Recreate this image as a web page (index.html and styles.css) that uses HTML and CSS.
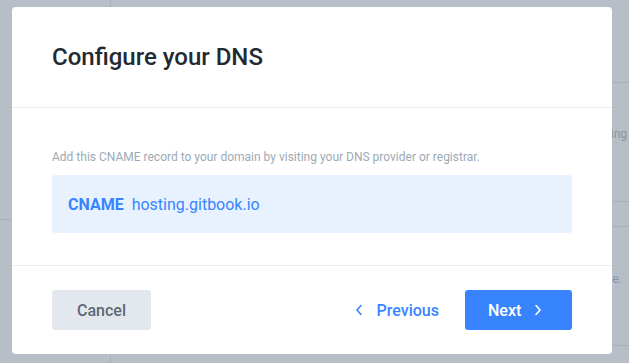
FILE: index.html
```html
<!DOCTYPE html>
<html lang="en">
<head>
  <meta charset="UTF-8" />
  <title>Configure your DNS</title>
  <link rel="stylesheet" href="styles.css">
</head>
<body>
  <div class="page">
    <aside class="sidebar">
      <div class="side-block"></div>
    </aside>
    <main class="content">
      <div class="row row-a"></div>
      <div class="row row-b"><span class="row-text">Custom domain setting</span></div>
      <div class="row row-c"></div>
      <div class="row row-d"><span class="row-text">Connect your domain to your space.</span></div>
    </main>
  </div>

  <div class="modal">
    <div class="modal-header">
      <h2 class="modal-title">Configure your DNS</h2>
    </div>
    <div class="modal-body">
      <p class="hint">Add this CNAME record to your domain by visiting your DNS provider or registrar.</p>
      <div class="record">
        <span class="record-type">CNAME</span>
        <span class="record-value">hosting.gitbook.io</span>
      </div>
    </div>
    <div class="modal-footer">
      <button class="btn btn-cancel">Cancel</button>
      <div class="nav">
        <button class="btn btn-link">
          <svg width="8" height="12" viewBox="0 0 8 12"><path d="M6 1.5L2 6l4 4.5" fill="none" stroke="currentColor" stroke-width="1.6" stroke-linecap="round" stroke-linejoin="round"/></svg>
          Previous
        </button>
        <button class="btn btn-primary">
          Next
          <svg width="8" height="12" viewBox="0 0 8 12"><path d="M2 1.5L6 6l-4 4.5" fill="none" stroke="currentColor" stroke-width="1.6" stroke-linecap="round" stroke-linejoin="round"/></svg>
        </button>
      </div>
    </div>
  </div>
</body>
</html>
```

FILE: styles.css
```css
html, body {
  margin: 0;
  height: 100%;
}

body {
  font-family: Roboto, "Liberation Sans", sans-serif;
  background-color: #b8bec8;
  overflow: hidden;
}

.page {
  display: flex;
  height: 100%;
}

.sidebar {
  width: 110px;
  border-right: 1px solid #a9b0ba;
}

.side-block {
  height: 219px;
  border-bottom: 1px solid #a9b0ba;
}

.content {
  flex: 1;
}

.row {
  border-bottom: 1px solid #a9b0ba;
  display: flex;
  align-items: center;
  justify-content: flex-end;
  color: #8b95a1;
  font-size: 12px;
}

.row-a { height: 82px; }
.row-b { height: 118px; }
.row-c { height: 24px; }
.row-d { height: 118px; }

.row-b .row-text { margin-right: 2px; margin-top: -16px; }
.row-d .row-text { margin-right: 7px; margin-top: -14px; }

.modal {
  position: absolute;
  left: 12px;
  top: 7px;
  width: 600px;
  background: #fff;
  border-radius: 4px;
}

.modal-header {
  height: 100px;
  display: flex;
  align-items: center;
  padding: 0 40px;
  border-bottom: 1px solid #e6ecf1;
}

.modal-title {
  margin: 0;
  font-size: 24px;
  font-weight: 500;
  color: #242a31;
}

.modal-body {
  padding: 40px 40px 32px;
  border-bottom: 1px solid #e6ecf1;
}

.hint {
  margin: 0 0 9px;
  font-size: 12px;
  line-height: 18px;
  color: #9daab6;
}

.record {
  height: 58px;
  display: flex;
  align-items: center;
  padding: 0 16px;
  background: #e8f2fe;
  border-radius: 3px;
  font-size: 16px;
  color: #3884ff;
}

.record-type {
  font-weight: 700;
  margin-right: 8px;
}

.modal-footer {
  display: flex;
  justify-content: space-between;
  align-items: center;
  padding: 24px 40px;
}

.nav {
  display: flex;
  align-items: center;
  gap: 26px;
}

.btn {
  height: 40px;
  border: none;
  border-radius: 3px;
  font-family: inherit;
  font-size: 16px;
  font-weight: 500;
  display: flex;
  align-items: center;
  cursor: pointer;
}

.btn-cancel {
  width: 99px;
  justify-content: center;
  background: #e3e8ee;
  color: #5c6975;
}

.btn-link {
  background: none;
  color: #3884ff;
  padding: 0;
  gap: 14px;
}

.btn-primary {
  width: 107px;
  padding: 0 0 0 23px;
  gap: 13px;
  background: #3884ff;
  color: #fff;
}
```
